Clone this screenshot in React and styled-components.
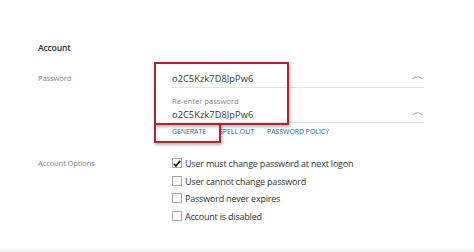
import React from "react";
import styled, { createGlobalStyle } from "styled-components";

const Global = createGlobalStyle`
  html, body { margin: 0; padding: 0; background: #ffffff; }
  body { font-family: "Open Sans", "Noto Sans", sans-serif; }
`;

const Page = styled.div`
  min-height: 252px;
  box-sizing: border-box;
  display: flex;
  flex-direction: column;
  padding: 41px 0 0 38px;
`;

const Heading = styled.div`
  font-size: 8.6px;
  line-height: 14px;
  font-weight: 600;
  letter-spacing: -0.2px;
  color: #2b2b2b;
  margin-bottom: 16px;
`;

const Row = styled.div`
  display: grid;
  grid-template-columns: 134px 252px;
  margin-top: ${(p) => p.$gap || 0}px;
`;

const Label = styled.div`
  font-size: 7.8px;
  letter-spacing: -0.25px;
  line-height: ${(p) => p.$lh || 14}px;
  color: #8a8a8a;
`;

const FieldColumn = styled.div`
  position: relative;
  display: flex;
  flex-direction: column;
`;

const Field = styled.div`
  display: flex;
  flex-direction: column;
  border-bottom: 1px solid #e3e3e3;
  padding-top: ${(p) => p.$pt || 0}px;
  padding-bottom: ${(p) => p.$pb || 0}px;
`;

const FieldLabel = styled.div`
  font-size: 7.6px;
  line-height: 12px;
  color: #8a8a8a;
`;

const ValueLine = styled.div`
  display: flex;
  align-items: center;
  justify-content: space-between;
  height: 14px;
`;

const Value = styled.span`
  font-size: 9.2px;
  color: #333333;
  letter-spacing: 0.1px;
`;

const Caret = styled.svg`
  width: 11px;
  height: 6px;
  margin-right: 1px;
  margin-top: -2px;
`;

const Links = styled.div`
  display: flex;
  gap: 13px;
  margin-top: 2px;
  height: 12px;
  align-items: center;
`;

const LinkButton = styled.span`
  font-size: 6.9px;
  color: #2d5aa0;
  text-transform: uppercase;
`;

const Annotation = styled.div`
  position: absolute;
  left: ${(p) => p.$x}px;
  top: ${(p) => p.$y}px;
  width: ${(p) => p.$w}px;
  height: ${(p) => p.$h}px;
  box-sizing: border-box;
  border: 2px solid #b5242c;
  box-shadow: 1px 2px 3px rgba(0, 0, 0, 0.28);
  pointer-events: none;
`;

const Options = styled.div`
  display: flex;
  flex-direction: column;
`;

const Option = styled.label`
  display: flex;
  align-items: center;
  height: 17.5px;
  gap: 3px;
  font-size: 9px;
  letter-spacing: -0.2px;
  color: #333333;
`;

const Box = styled.span`
  width: 10px;
  height: 10px;
  box-sizing: border-box;
  border: 1px solid #a8a8a8;
  background: #fff;
  display: flex;
  align-items: center;
  justify-content: center;
  margin-top: -1px;
`;

const Footer = styled.div`
  margin-top: auto;
  margin-left: -38px;
  height: 5px;
  background: linear-gradient(#ffffff, #efefef);
`;

const CaretIcon = () => (
  <Caret viewBox="0 0 11 6">
    <path d="M0.5 5 Q5.5 0.5 10.5 5" fill="none" stroke="#a0a0a0" strokeWidth="1" />
  </Caret>
);

const options = [
  { text: "User must change password at next logon", checked: true },
  { text: "User cannot change password", checked: false },
  { text: "Password never expires", checked: false },
  { text: "Account is disabled", checked: false },
];

export default function App() {
  return (
    <>
      <Global />
      <Page>
        <Heading>Account</Heading>
        <Row>
          <Label>Password</Label>
          <FieldColumn>
            <Field $pb={2}>
              <ValueLine>
                <Value>o2C5Kzk7D8JpPw6</Value>
                <CaretIcon />
              </ValueLine>
            </Field>
            <Field $pt={7} $pb={1}>
              <FieldLabel>Re-enter password</FieldLabel>
              <ValueLine>
                <Value>o2C5Kzk7D8JpPw6</Value>
                <CaretIcon />
              </ValueLine>
            </Field>
            <Links>
              <LinkButton>Generate</LinkButton>
              <LinkButton>Spell out</LinkButton>
              <LinkButton>Password policy</LinkButton>
            </Links>
            <Annotation $x={-18} $y={-9} $w={135} $h={63} />
            <Annotation $x={-18} $y={52} $w={67} $h={20} />
          </FieldColumn>
        </Row>
        <Row $gap={18}>
          <Label $lh={17.5}>Account Options</Label>
          <Options>
            {options.map((o) => (
              <Option key={o.text}>
                <Box>
                  {o.checked && (
                    <svg width="8" height="7" viewBox="0 0 8 7">
                      <path d="M0.8 3.8 L2.9 6 L7.2 0.8" fill="none" stroke="#111" strokeWidth="1.6" />
                    </svg>
                  )}
                </Box>
                {o.text}
              </Option>
            ))}
          </Options>
        </Row>
        <Footer />
      </Page>
    </>
  );
}
